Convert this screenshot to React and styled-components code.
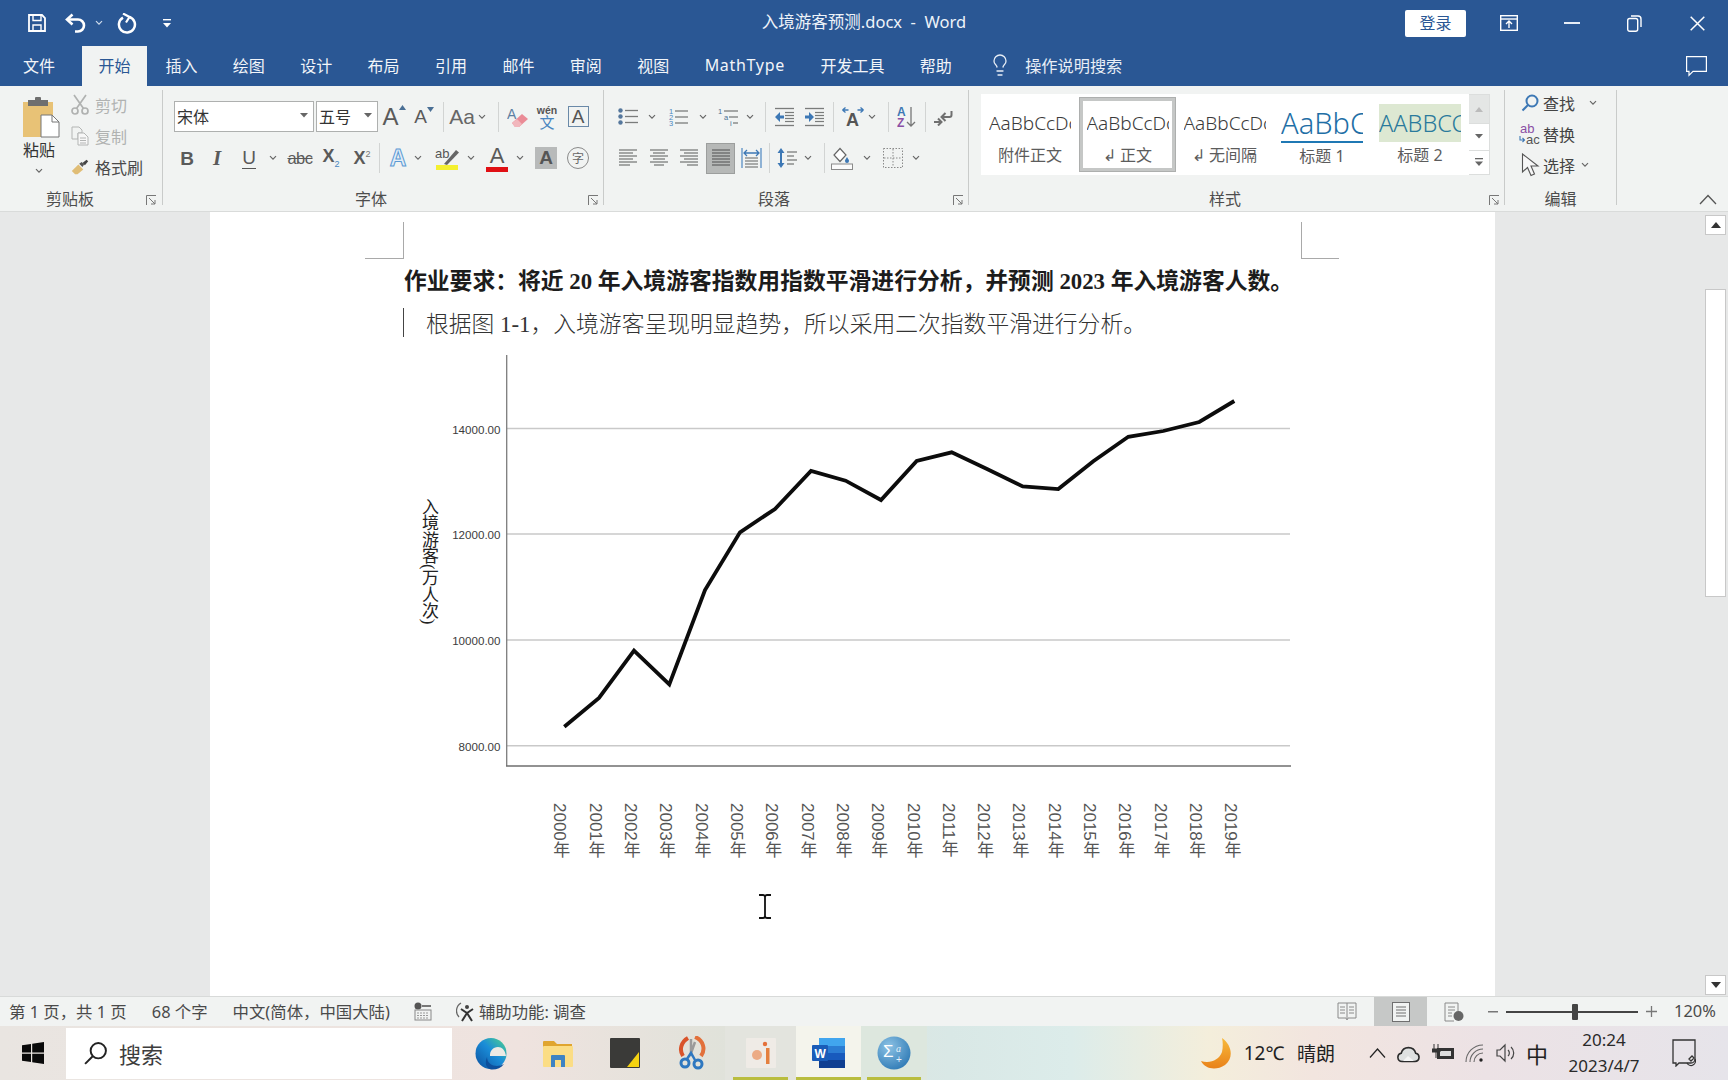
import React from "react";
import styled, { createGlobalStyle } from "styled-components";
import { Lightbulb } from "lucide-react";

const SANS = `"Noto Sans", "Noto Sans CJK SC", sans-serif`;
const SERIF = `"Liberation Serif", "Noto Sans CJK SC", serif`;
const BLUE = "#2a5794";
const RIBBON = "#f1f3f2";
const INK = "#5a5a5a";

const Global = createGlobalStyle`
  html, body { margin: 0; padding: 0; height: 100%; overflow: hidden; }
  body { font-family: ${SANS}; }
  svg { display: block; }
`;

const Shell = styled.div`
  width: 1728px; height: 1080px; display: flex; flex-direction: column; background: ${RIBBON}; overflow: hidden;
`;

/* ---------- title + tabs ---------- */
const TitleBar = styled.header`
  flex: none; height: 46px; background: ${BLUE}; color: #fff;
  display: grid; grid-template-columns: minmax(0, 1fr) auto minmax(0, 1fr); align-items: center;
`;
const Quick = styled.div`display: flex; align-items: center; height: 44px;`;
const DocTitle = styled.div`font-size: 16.5px; white-space: pre; color: #eef3f9; margin-top: -4px;`;
const WinControls = styled.div`display: flex; align-items: center; height: 44px; justify-content: flex-end; padding-right: 21px;`;
const SignIn = styled.button`
  flex: none; width: 61px; height: 27px; border: 0; border-radius: 2px; background: #fff; color: ${BLUE};
  font: 16px ${SANS}; padding: 0 0 2px;
`;
const TabBar = styled.nav`
  flex: none; height: 40px; background: ${BLUE}; display: flex; align-items: stretch; gap: 1.4px;
`;
const Tab = styled.div`
  flex: none; display: flex; align-items: center; justify-content: center; font-size: 16px; white-space: nowrap; padding-bottom: 3px;
  padding-left: ${(p) => (p.$w ? 0 : 17)}px; padding-right: ${(p) => (p.$w ? 0 : 17)}px;
  width: ${(p) => (p.$w ? `${p.$w}px` : "auto")};
  margin-right: ${(p) => p.$mr || 0}px;
  letter-spacing: ${(p) => p.$ls || 0}px;
  box-sizing: border-box;
  color: ${(p) => (p.$active ? BLUE : "#f2f5f9")};
  background: ${(p) => (p.$active ? RIBBON : "transparent")};
`;
const TellMe = styled.div`
  display: flex; align-items: center; gap: 13px; margin-left: 18px; color: #e8eef6; font-size: 16.2px; padding-bottom: 3px;
`;
const CommentSlot = styled.div`margin-left: auto; margin-right: 21px; display: flex; align-items: center; color: #fff;`;

/* ---------- ribbon ---------- */
const Ribbon = styled.section`
  flex: none; height: 126px; box-sizing: border-box; background: ${RIBBON}; border-bottom: 1px solid #d9dbda;
  display: flex; align-items: flex-start; padding-top: 4px;
`;
const Group = styled.div`
  flex: none; width: ${(p) => p.$w}px; height: 115px; box-sizing: border-box; display: flex; flex-direction: column;
  border-right: ${(p) => (p.$last ? 0 : "1px solid #c9cbca")};
`;
const GroupBody = styled.div`flex: 1; min-height: 0; display: flex; flex-direction: column; padding-top: ${(p) => p.$pt ?? 11}px;`;
const GroupLabel = styled.div`
  flex: none; height: 24px; margin-bottom: -5px; position: relative; display: flex; align-items: center; justify-content: center;
  font-size: 16px; color: #4d4d4d;
  padding-right: ${(p) => p.$pr || 0}px;
`;
const Launcher = styled.span`position: absolute; right: ${(p) => p.$r ?? 4}px; top: 9px;`;
const Row = styled.div`display: flex; align-items: center; flex: none; height: ${(p) => p.$h}px; margin-top: ${(p) => p.$mt || 0}px;`;
const Slot = styled.div`
  flex: none; width: ${(p) => p.$w}px; margin-left: ${(p) => p.$ml}px; display: flex; align-items: center; justify-content: center; height: 100%;
`;
function Track({ from, h = 31, mt, items }) {
  let x = from;
  return (
    <Row $h={h} $mt={mt}>
      {items.map(([c, w, n], i) => {
        const ml = c - w / 2 - x;
        x = c + w / 2;
        return <Slot key={i} $w={w} $ml={ml}>{n}</Slot>;
      })}
    </Row>
  );
}
const VSep = styled.span`display: block; width: 1px; height: ${(p) => p.$h || 30}px; background: #d2d4d3;`;

const ClipRow = styled.div`display: flex; flex: 1; min-height: 0;`;
const PasteCol = styled.div`flex: none; width: 71px; box-sizing: border-box; padding: 7px 0 0 23px; display: flex; flex-direction: column; font-size: 16px; color: #333;`;
const PasteLabel = styled.div`line-height: 20px; margin-top: 2px;`;
const PasteChevron = styled.div`margin: 8px 0 0 12px;`;
const ClipList = styled.div`display: flex; flex-direction: column; margin-top: -1px;`;
const ClipItem = styled.div`
  height: 31px; display: flex; align-items: center; gap: 6px; font-size: 16px; color: ${(p) => (p.$off ? "#b0b2b1" : "#4a4a4a")};
`;
const IconCell = styled.span`flex: none; width: ${(p) => p.$w || 18}px; display: flex; justify-content: center;`;

const Combo = styled.div`
  width: 100%; height: 31px; box-sizing: border-box; border: 1px solid #aeb0af; background: #fff; display: flex; align-items: center; justify-content: space-between;
  padding: 0 5px 2px 2px; font-size: 16px; color: #333;
`;
const Letter = styled.span`
  font-family: "Liberation Sans", sans-serif; font-size: ${(p) => p.$s || 20}px; color: ${(p) => p.$c || INK}; font-weight: ${(p) => p.$wt || 400};
  font-style: ${(p) => (p.$it ? "italic" : "normal")}; line-height: 1; white-space: nowrap;
`;
const SerifI = styled(Letter)`font-family: "Liberation Serif", serif; font-weight: 700; font-style: italic;`;
const Underlined = styled(Letter)`border-bottom: 1.5px solid #555; padding-bottom: 1px;`;
const Strike = styled(Letter)`text-decoration: line-through; letter-spacing: -0.5px;`;
const Script = styled.span`font-size: 9px; color: ${(p) => p.$c || "#5b8fc0"}; font-weight: 400; vertical-align: ${(p) => (p.$up ? "super" : "sub")}; font-family: "Liberation Sans", sans-serif;`;
const LetterTri = styled.span`display: inline-flex; align-items: flex-start; gap: 0;`;
const BoxedA = styled.span`
  width: 21px; height: 21px; box-sizing: border-box; border: 1px solid #6a89a8; display: flex; align-items: center; justify-content: center;
  font: 19px "Liberation Sans", sans-serif; color: #555;
`;
const ShadedA = styled(BoxedA)`background: #b8baba; border: 0; font-weight: 700; width: 22px; height: 22px;`;
const CircleChar = styled.span`
  width: 22px; height: 22px; box-sizing: border-box; border: 1.5px solid #8a8a8a; border-radius: 50%; display: flex; align-items: center; justify-content: center;
  font-size: 12px; color: #666;
`;
const Outlined = styled.span`
  font: 700 23px "Liberation Sans", sans-serif; color: #e4eef8; -webkit-text-stroke: 1px #5c9ad4; line-height: 1;
`;
const Stack = styled.span`display: flex; flex-direction: column; align-items: center; line-height: 1;`;
const Wen = styled.span`font: 700 10.5px "Liberation Sans", sans-serif; color: #555;`;
const Wenzi = styled.span`font-size: 15px; color: #4a86c0; margin-top: -1px;`;
const BarWrap = styled.span`display: flex; flex-direction: column; align-items: center; line-height: 1;`;
const ColorBar = styled.span`display: block; width: ${(p) => p.$w || 22}px; height: 5px; background: ${(p) => p.$c}; margin-top: 0;`;
const ActiveBox = styled.div`
  width: 29px; height: 31px; box-sizing: border-box; background: #b6b8b7; border: 1px solid #9c9e9d; display: flex; align-items: center; justify-content: center;
`;

/* styles gallery */
const GalleryRow = styled.div`display: flex; margin-left: 12px; flex: none; height: 81px;`;
const Gallery = styled.div`display: flex; background: #fff; width: 488px; height: 81px; flex: none;`;
const StyleCard = styled.div`
  flex: none; width: ${(p) => p.$w}px; height: ${(p) => (p.$sel ? 75 : 81)}px; box-sizing: border-box; overflow: hidden; display: flex; flex-direction: column; align-items: center;
  margin-top: ${(p) => (p.$sel ? 3 : 0)}px;
  border: ${(p) => (p.$sel ? "4px solid #c5c7c6" : "0")};
  outline: ${(p) => (p.$sel ? "1px solid #adafae" : "0")};
  outline-offset: -1px;
  padding-top: ${(p) => (p.$sel ? 3 : 10)}px;
  color: #333;
`;
const Sample = styled.div`
  height: 38px; width: 82px; flex: none; overflow: hidden; white-space: nowrap; font-family: "Noto Sans", sans-serif; font-size: 19px; line-height: 38px;
  color: #3a3a3a; text-align: left; font-weight: 300;
`;
const Heading1 = styled(Sample)`font-size: 29px; color: #1f6fa6; border-bottom: 2px solid #1f78b4; height: 37px;`;
const Heading2 = styled(Sample)`font-size: 23.5px; color: #2a7a9c; background: #dde8d2;`;
const StyleName = styled.div`font-size: 16px; line-height: 22px; color: #5c5c5c; margin-top: 2px; display: flex; align-items: center; gap: 4px;`;
const GalScroll = styled.div`flex: none; width: 21px; height: 81px; display: flex; flex-direction: column; background: #fff; box-sizing: border-box; border: 1px solid #dcdedd; border-left: 0;`;
const GalBtn = styled.div`
  display: flex; align-items: center; justify-content: center; height: ${(p) => p.$h}px; background: ${(p) => (p.$dim ? "#e4e6e5" : "#fff")}; border-bottom: ${(p) => (p.$last ? 0 : "1px solid #dcdedd")};
`;
const EditList = styled.div`display: flex; flex-direction: column; flex: 1; margin-top: -1px;`;
const EditItem = styled.div`
  height: 31px; display: flex; align-items: center; padding-left: 12px; font-size: 16px; color: #444; padding-bottom: 3px; box-sizing: border-box;
`;
const EditIcon = styled.span`flex: none; width: 26px; display: flex; justify-content: center;`;
const EditChev = styled.span`margin-left: ${(p) => p.$ml}px;`;
const Collapse = styled.div`margin-left: auto; margin-right: 11px; margin-top: 104px; color: #555; flex: none;`;

/* ---------- document ---------- */
const Main = styled.main`flex: 1; min-height: 0; display: flex; background: #e7e8e8; position: relative;`;
const PageColumn = styled.div`flex: none; width: 1285px; margin-left: 210px; background: #fff; position: relative; box-sizing: border-box; padding: 48px 0 0 194px; overflow: hidden;`;
const CropH = styled.i`position: absolute; top: 46px; width: 38px; height: 1px; background: #a9a9a9; left: ${(p) => p.$l}px;`;
const CropV = styled.i`position: absolute; top: 10px; width: 1px; height: 37px; background: #a9a9a9; left: ${(p) => p.$l}px;`;
const Para = styled.p`
  margin: 0; height: 43px; line-height: 43px; font-family: ${SERIF}; font-size: 22.8px; color: ${(p) => (p.$bold ? "#1c1c1c" : "#333")}; white-space: pre; position: relative;
  font-weight: ${(p) => (p.$bold ? 700 : 300)};
  padding-left: ${(p) => p.$indent || 0}px;
  ${(p) => p.$change && `&::before { content: ""; position: absolute; left: -1px; top: 5px; height: 29px; width: 1px; background: #444; }`}
`;
const Chart = styled.svg`margin: 4px 0 0 -4px;`;
const IBeam = styled.svg`position: absolute; left: 548px; top: 682px;`;
const VScroll = styled.div`
  flex: none; width: 21px; margin-left: 210px; display: flex; flex-direction: column; align-items: stretch; padding-top: 3px; box-sizing: border-box; height: 785px; padding-bottom: 2px;
`;
const ScrollBtn = styled.div`height: 20px; background: #fff; border: 1px solid #c8c8c8; box-sizing: border-box; display: flex; align-items: center; justify-content: center;`;
const ThumbTrack = styled.div`flex: 1; padding-top: 54px;`;
const Thumb = styled.div`height: 308px; background: #fff; border: 1px solid #c8c8c8; box-sizing: border-box;`;

/* ---------- status bar ---------- */
const StatusBar = styled.footer`
  flex: none; height: 30px; box-sizing: border-box; background: ${RIBBON}; border-top: 1px solid #d8dad9;
  display: flex; align-items: center; font-size: 16.4px; color: #4a4a4a; position: relative;
`;
const StatusText = styled.span`flex: none; margin-left: ${(p) => p.$ml}px; white-space: pre; padding-bottom: 2px;`;
const StatusIcon = styled.span`flex: none; margin-left: ${(p) => p.$ml}px; display: flex;`;
const ViewBtn = styled.span`
  flex: none; height: 29px; width: ${(p) => p.$w}px; margin-left: ${(p) => p.$ml}px; background: ${(p) => (p.$on ? "#c6c8c7" : "transparent")};
  display: flex; align-items: center; justify-content: center;
`;
const Zoomer = styled.span`flex: none; width: 132px; height: 2px; background: #444; margin-left: 8px; position: relative; `;
const ZoomThumb = styled.i`position: absolute; left: 66px; top: -7px; width: 6px; height: 16px; background: #444; border-radius: 1px;`;
const RightCluster = styled.div`margin-left: auto; display: flex; align-items: center; height: 100%; width: ${(p) => p.$w}px;`;

/* ---------- taskbar ---------- */
const Taskbar = styled.div`
  flex: none; height: 54px; display: flex; align-items: center; position: relative;
  background: linear-gradient(90deg, #e9e5e1 0%, #efe3df 30%, #e0e2da 42%, #d9e8e6 55%, #dcecea 62%, #f4eedb 70%, #f2e5df 76%, #ece2e5 86%, #e6e4ea 100%);
`;
const StartBtn = styled.div`flex: none; width: 66px; display: flex; justify-content: center;`;
const SearchBox = styled.div`
  flex: none; width: 386px; height: 51px; background: #fff; display: flex; align-items: center; padding-left: 17px; gap: 11px; box-sizing: border-box; font-size: 22px; color: #3d3d3d; margin-right: 6px;
`;
const AppSlot = styled.div`
  flex: none; width: ${(p) => p.$w}px; height: 54px; display: flex; align-items: center; justify-content: center; position: relative;
  background: ${(p) => p.$bg || "transparent"};
  ${(p) => p.$run && `&::after { content: ""; position: absolute; bottom: 0; left: ${p.$inset}px; right: ${p.$inset}px; height: 3px; background: #b9bd3f; }`}
`;
const Tray = styled.div`flex: 1; height: 54px; color: #222;`;
const Clock = styled.div`display: flex; flex-direction: column; align-items: center; font-size: 17px; line-height: 26px; color: #2a2a2a; font-family: "Noto Sans", sans-serif;`;
const TrayLabel = styled.span`white-space: nowrap; font-size: ${(p) => p.$s || 19}px;`;

/* ---------- icons ---------- */
const C = "#7a7c7b";
const Chev = ({ c = "#666" }) => (
  <svg width="8" height="6" viewBox="0 0 8 6" fill="none"><path d="M1 1.2 4 4.2 7 1.2" stroke={c} strokeWidth="1.2" /></svg>
);
const Caret = () => (
  <svg width="8" height="5" viewBox="0 0 8 5"><path d="M0 0h8L4 4.5z" fill="#666" /></svg>
);
const LauncherIcon = () => (
  <svg width="11" height="11" viewBox="0 0 11 11" fill="none" stroke="#777"><path d="M.5 10V.5H10" /><path d="M3 3 9 9M9 5v4H5" /></svg>
);
const Lines = ({ w, h, ys, x1, x2, c = C, sw = 1.3 }) => (
  <svg width={w} height={h} viewBox={`0 0 ${w} ${h}`}>
    {ys.map((y, i) => (
      <line key={i} x1={Array.isArray(x1) ? x1[i % x1.length] : x1} x2={Array.isArray(x2) ? x2[i % x2.length] : x2} y1={y} y2={y} stroke={c} strokeWidth={sw} />
    ))}
  </svg>
);
const aligned = [2, 5, 8, 11, 14, 17];
const AlignLeft = () => <Lines w={20} h={20} ys={aligned} x1={1} x2={[19, 15, 19, 15, 19, 12]} />;
const AlignCenter = () => <Lines w={20} h={20} ys={aligned} x1={[1, 4, 1, 4, 1, 5]} x2={[19, 16, 19, 16, 19, 15]} />;
const AlignRight = () => <Lines w={20} h={20} ys={aligned} x1={[1, 5, 1, 5, 1, 8]} x2={19} />;
const Justify = () => <Lines w={20} h={20} ys={aligned} x1={1} x2={19} c="#666" />;
const Bullets = () => (
  <svg width="21" height="17" viewBox="0 0 21 17">
    {[2.5, 8.5, 14.5].map((y) => (
      <g key={y}><circle cx="2.5" cy={y} r="2.2" fill="#55779c" /><line x1="7" x2="20" y1={y} y2={y} stroke={C} strokeWidth="1.3" /></g>
    ))}
  </svg>
);
const Numbers = () => (
  <svg width="21" height="18" viewBox="0 0 21 18" fontFamily="Liberation Sans" fontSize="7.5" fill="#4a86c0">
    <text x="1" y="6">1</text><text x="1" y="12">2</text><text x="1" y="18">3</text>
    {[3, 9, 15].map((y) => <line key={y} x1="7" x2="20" y1={y} y2={y} stroke={C} strokeWidth="1.3" />)}
  </svg>
);
const Multi = () => (
  <svg width="21" height="18" viewBox="0 0 21 18" fontFamily="Liberation Sans" fontSize="7.5" fill="#4a6f95">
    <text x="0" y="6">1</text><text x="6" y="12">a</text><text x="12" y="18">i</text>
    <line x1="6" x2="20" y1="3" y2="3" stroke={C} strokeWidth="1.3" />
    <line x1="11" x2="20" y1="9" y2="9" stroke={C} strokeWidth="1.3" />
    <line x1="15" x2="20" y1="15" y2="15" stroke={C} strokeWidth="1.3" />
  </svg>
);
const Indent = ({ inc }) => (
  <svg width="21" height="20" viewBox="0 0 21 20">
    <line x1="1" x2="20" y1="1.5" y2="1.5" stroke={C} strokeWidth="1.3" />
    <line x1="1" x2="20" y1="18.5" y2="18.5" stroke={C} strokeWidth="1.3" />
    {[5.5, 8.5, 11.5, 14.5].map((y) => <line key={y} x1="11" x2="20" y1={y} y2={y} stroke={C} strokeWidth="1.2" />)}
    {inc ? <path d="M1 8.5h4V5l5 5-5 5v-3.500H1z" fill="#3d78b5" /> : <path d="M10 8.5H6V5l-5 5 5 5v-3.500h4z" fill="#3d78b5" />}
  </svg>
);
const TextDir = () => (
  <svg width="22" height="21" viewBox="0 0 22 21" fill="none">
    <path d="M0.500 4h6M0.500 4l3-2.500M0.500 4l3 2.500" stroke="#3d78b5" strokeWidth="1.3" />
    <path d="M21.500 4h-6M21.500 4l-3-2.500M21.500 4l-3 2.500" stroke="#3d78b5" strokeWidth="1.3" />
    <text x="4" y="20" fontFamily="Liberation Sans" fontWeight="700" fontSize="18" fill="#555">A</text>
  </svg>
);
const Sort = () => (
  <svg width="20" height="22" viewBox="0 0 20 22" fill="none" fontFamily="Liberation Sans" fontWeight="700" fontSize="12">
    <text x="0" y="10" fill="#3d78b5">A</text>
    <text x="0" y="21" fill="#8a4fa5">Z</text>
    <path d="M14 1v19M10 16l4 4 4-4" stroke="#777" strokeWidth="1.3" />
  </svg>
);
const Marks = () => (
  <svg width="20" height="18" viewBox="0 0 20 18" fill="none" strokeWidth="2">
    <path d="M1 14h7M5 10.500 8.500 14 5 17.500" stroke="#707070" />
    <path d="M18.500 3v4a2 2 0 0 1-2 2H9M12.500 5 8.500 9l4 4" stroke="#707070" />
  </svg>
);
const Distribute = () => (
  <svg width="21" height="22" viewBox="0 0 21 22" fill="none">
    <line x1="1" x2="1" y1="1" y2="21" stroke="#5a8fc4" strokeWidth="1.3" />
    <line x1="20" x2="20" y1="1" y2="21" stroke="#5a8fc4" strokeWidth="1.3" />
    <path d="M3 6h15M6 3 3 6l3 3M15 3l3 3-3 3" stroke="#3d78b5" strokeWidth="1.300" />
    {[11, 14, 17, 20].map((y) => <line key={y} x1="4" x2="17" y1={y} y2={y} stroke={C} strokeWidth="1.2" />)}
  </svg>
);
const LineSpacing = () => (
  <svg width="21" height="22" viewBox="0 0 21 22" fill="none">
    <path d="M4 1 0.500 6h7zM4 21l-3.500-5h7z" fill="#3d78b5" />
    <line x1="4" x2="4" y1="5" y2="17" stroke="#3d78b5" strokeWidth="2" />
    {[5, 9, 13, 17].map((y, i) => <line key={y} x1="10" x2={i % 2 ? 17 : 20} y1={y} y2={y} stroke={C} strokeWidth="1.3" />)}
  </svg>
);
const Shading = () => (
  <svg width="22" height="23" viewBox="0 0 22 23" fill="none">
    <path d="M9 1.500 3 8l6 6.500L15 8z" stroke="#666" strokeWidth="1.2" fill="#fff" />
    <path d="M16 10c1 1.600 2 2.800 2 4a2 2 0 0 1-4 0c0-1.200 1-2.400 2-4z" fill="#3d78b5" />
    <rect x=".5" y="17" width="21" height="5.500" stroke="#8a8a8a" fill="#fbfbfb" />
  </svg>
);
const Borders = () => (
  <svg width="20" height="20" viewBox="0 0 20 20" fill="none" stroke="#8a8a8a" strokeWidth="1" strokeDasharray="1.500 1.500">
    <rect x=".5" y=".5" width="19" height="19" />
    <path d="M10 1v18M1 10h18" />
  </svg>
);
const PasteIcon = () => (
  <svg width="37" height="41" viewBox="0 0 37 41">
    <rect x="0" y="5" width="30" height="35" fill="#e8c276" />
    <rect x="5" y="3" width="20" height="6" fill="#6f6f6f" />
    <rect x="12" y="0" width="6" height="5" rx="1" fill="#6f6f6f" />
    <path d="M18 18h11l7 7v15H18z" fill="#fff" stroke="#777" />
    <path d="M29 18v7h7" fill="none" stroke="#777" />
  </svg>
);
const CutIcon = () => (
  <svg width="18" height="21" viewBox="0 0 18 21" fill="none" stroke="#b0b2b1" strokeWidth="1.700">
    <circle cx="4" cy="17" r="3" /><circle cx="14" cy="17" r="3" />
    <path d="M5.500 14.500 15 1M12.500 14.500 3 1" />
  </svg>
);
const CopyIcon = () => (
  <svg width="18" height="20" viewBox="0 0 18 20" fill="none" stroke="#b3b5b4">
    <path d="M1 1h7l3 3v3H7v6H1z" /><path d="M7 7h6l4 4v8H7z" fill="#f7f7f7" /><path d="M9 12h6M9 14.500h6M9 17h6" />
  </svg>
);
const BrushIcon = () => (
  <svg width="22" height="20" viewBox="0 0 22 20">
    <path d="M1 15 9 7l6 6-7 6H5z" fill="#e0bd76" />
    <path d="M10 6l3-2 3 3-2 3z" fill="#555" />
    <path d="M14 5l5-4 2 2-4 5z" fill="#444" />
  </svg>
);
const EraserIcon = () => (
  <svg width="22" height="22" viewBox="0 0 22 22">
    <text x="0" y="13" fontFamily="Liberation Sans" fontSize="14" fill="#5d7fa2">A</text>
    <path d="M5 17 15 8l6 5-9 8H8z" fill="#ea8b96" />
    <path d="M5 17l3 4h4l3-3-5-5z" fill="#f1b6bc" />
  </svg>
);
const Highlighter = () => (
  <svg width="24" height="18" viewBox="0 0 24 18">
    <text x="0" y="11" fontFamily="Liberation Sans" fontSize="13" fill="#555">ab</text>
    <path d="M9 17 21 3l3 2.500L12 18z" fill="#666" />
  </svg>
);
const SearchGlass = ({ c = "#3d78b5", s = 18, w = 2 }) => (
  <svg width={s} height={s} viewBox="0 0 18 18" fill="none" stroke={c} strokeWidth={w}>
    <circle cx="11" cy="7" r="5.500" /><path d="M7 11 1.500 16.500" />
  </svg>
);
const AbAc = () => (
  <svg width="22" height="24" viewBox="0 0 22 24" fontFamily="Liberation Sans" fontSize="13">
    <text x="1" y="11" fill="#8a4fa5">ab</text>
    <text x="7" y="22" fill="#555">ac</text>
    <path d="M1 14v4h4M3.500 16l2 2-2 2" stroke="#3d78b5" fill="none" strokeWidth="1.100" />
  </svg>
);
const ArrowCursor = () => (
  <svg width="19" height="25" viewBox="0 0 19 25" fill="#f7f7f7" stroke="#555" strokeWidth="1.100">
    <path d="M1.500 1v18l5-4.500 3.500 8 3.500-1.500-3.500-8h7z" />
  </svg>
);
const WinLogo = () => (
  <svg width="22" height="22" viewBox="0 0 22 22" fill="#0a0a0a">
    <path d="M0 3.200 9 2v8.500H0zM10.200 1.800 22 0v10.500H10.200zM0 11.700h9V20L0 18.800zM10.200 11.700H22V22l-11.800-1.800z" />
  </svg>
);
const Edge = () => (
  <svg width="32" height="33" viewBox="0 0 32 33">
    <defs>
      <linearGradient id="eg" x1="0" y1="1" x2="1" y2="0"><stop offset="0" stopColor="#0c4f9e" /><stop offset=".55" stopColor="#1a8dd8" /><stop offset="1" stopColor="#4fd48a" /></linearGradient>
    </defs>
    <circle cx="16" cy="16.500" r="15.500" fill="url(#eg)" />
    <path d="M31 19H15c-.500-5 3-9 8-9 4 0 7 3 8 9z" fill="#eceae4" />
    <path d="M12 20c0 6 5 9 10 9 2 0 5-1 7-2-3 4-8 6-13 5.500C10 31 10 25 12 20z" fill="#0d4f9c" />
  </svg>
);
const Folder = () => (
  <svg width="30" height="27" viewBox="0 0 30 27">
    <path d="M0 2a1 1 0 0 1 1-1h10l3 3h15v6H0z" fill="#e0a52f" />
    <rect x="0" y="6" width="30" height="21" rx="1" fill="#fbdd85" />
    <path d="M8 27V16a1 1 0 0 1 1-1h12a1 1 0 0 1 1 1v11h-4v-7h-6v7z" fill="#3e83c3" />
  </svg>
);
const Sticky = () => (
  <svg width="30" height="30" viewBox="0 0 30 30">
    <rect width="30" height="30" rx="1" fill="#3a3a38" />
    <path d="M29 14v15H17z" fill="#f5d312" />
  </svg>
);
const SnipIcon = () => (
  <svg width="28" height="34" viewBox="0 0 28 34" fill="none">
    <path d="M10 2C3 6 1 14 5 20" stroke="#d9542b" strokeWidth="4" />
    <path d="M17 1c8 3 11 12 6 19" stroke="#e2703b" strokeWidth="4" />
    <path d="M13 3v14M17 6l-5 14" stroke="#9a9a9a" strokeWidth="2.500" />
    <circle cx="7" cy="27" r="4" stroke="#2f78c0" strokeWidth="3" />
    <circle cx="20" cy="28" r="4" stroke="#2f78c0" strokeWidth="3" />
    <path d="M9 23l4-6 4 7" stroke="#2f78c0" strokeWidth="2.500" />
  </svg>
);
const Tile = () => (
  <svg width="30" height="30" viewBox="0 0 30 30">
    <rect width="30" height="30" rx="1" fill="#efebe6" />
    <circle cx="11" cy="17" r="5" fill="#ecab85" />
    <circle cx="19" cy="6" r="2.200" fill="#e4703a" />
    <rect x="20" y="10" width="3.500" height="16" fill="#e4803f" />
  </svg>
);
const WordIcon = () => (
  <svg width="33" height="30" viewBox="0 0 33 30">
    <rect x="7" y="0" width="26" height="8" fill="#41a5ee" />
    <rect x="7" y="8" width="26" height="7" fill="#2b7cd3" />
    <rect x="7" y="15" width="26" height="7" fill="#185abd" />
    <rect x="7" y="22" width="26" height="8" fill="#103f91" />
    <rect x="0" y="7" width="16" height="16" rx="1" fill="#1a5cb8" />
    <text x="2.500" y="19.500" fontFamily="Liberation Sans" fontWeight="700" fontSize="12" fill="#fff">W</text>
  </svg>
);
const SigmaIcon = () => (
  <svg width="34" height="34" viewBox="0 0 34 34">
    <defs><radialGradient id="sg" cx=".35" cy=".3" r=".8"><stop offset="0" stopColor="#8cc2e4" /><stop offset="1" stopColor="#2c78b4" /></radialGradient></defs>
    <circle cx="17" cy="17" r="16.500" fill="url(#sg)" />
    <text x="6" y="21" fontFamily="Liberation Sans" fontSize="17" fill="#fff">Σ</text>
    <text x="19" y="16" fontFamily="Liberation Serif" fontStyle="italic" fontSize="10" fill="#eaf4fb">a</text>
    <text x="19" y="27" fontFamily="Liberation Sans" fontSize="10" fill="#eaf4fb">+</text>
  </svg>
);
const Moon = () => (
  <svg width="32" height="31" viewBox="0 0 32 31">
    <defs><linearGradient id="mg" x1="0" y1="0" x2="0" y2="1"><stop offset="0" stopColor="#f7b93a" /><stop offset="1" stopColor="#e9821a" /></linearGradient></defs>
    <path d="M21 0C31 7 33 20 24 27 15 33 4 31 0 23 9 26 18 22 21 14 22 9 22 4 21 0z" fill="url(#mg)" />
  </svg>
);
const CloudTray = () => (
  <svg width="23" height="19" viewBox="0 0 23 19" fill="#dfe1e1" stroke="#2c2c2c" strokeWidth="1.600">
    <path d="M5 17.500a4.200 4.200 0 0 1-.8-8.300 7.500 7.500 0 0 1 14.500 0 4.200 4.200 0 0 1-.7 8.300z" />
    <path d="M6 17l5-5 6 5" fill="#f5f5f5" stroke="none" />
  </svg>
);

const yrs = Array.from({ length: 20 }, (_, i) => 2000 + i);
const pts = [[564.3,726.7],[599,698],[634,650.7],[669.3,684.3],[705,590],[740,532.3],[775,509],[811,471],[845.6,480.7],[881,500],[916.7,460.9],[951.7,452.3],[987,469],[1022.7,486.4],[1058.3,489.1],[1093.3,461.2],[1128.3,436.8],[1163.3,431],[1199.3,422],[1234.3,401]];
const grid = [[428.5,"14000.00"],[534,"12000.00"],[640,"10000.00"],[745.7,"8000.00"]];

const ChartFig = () => (
  <Chart width="920" height="520" viewBox="400 350 920 520">
    {grid.map(([y, t]) => (
      <g key={t}>
        <line x1="507" x2="1290" y1={y} y2={y} stroke="#c9c9c9" strokeWidth="1.5" />
        <text x="500.500" y={y + 5} textAnchor="end" fontFamily="Liberation Sans" fontSize="11.600" fill="#3c3c3c">{t}</text>
      </g>
    ))}
    <line x1="506.700" x2="506.700" y1="355" y2="766" stroke="#7c7c7c" strokeWidth="1.300" />
    <line x1="506" x2="1291" y1="766" y2="766" stroke="#6e6e6e" strokeWidth="1.500" />
    <polyline points={pts.map((p) => p.join(",")).join(" ")} fill="none" stroke="#0c0c0c" strokeWidth="3.800" strokeLinejoin="miter" />
    <text x="428.500" y="498" style={{ writingMode: "vertical-rl" }} fontFamily={SERIF} fontSize="17" fill="#222" letterSpacing="-0.5">入境游客(万人次)</text>
    {yrs.map((y, i) => (
      <text key={y} x={559.7 + i * 35.33} y="803" style={{ writingMode: "vertical-rl" }} fontFamily={`"Liberation Sans","Noto Sans CJK SC",sans-serif`} fontSize="17" fill="#555">{y}年</text>
    ))}
  </Chart>
);

export default function App() {
  return (
    <Shell>
      <Global />
      <TitleBar>
        <Quick>
          <Track from={0} h={44} items={[
            [37, 24, <svg width="18" height="18" viewBox="0 0 18 18" fill="none" stroke="#fff" strokeWidth="1.800"><path d="M1 1h13l3 3v13H1z" /><path d="M5 1.500v5h8v-5M5 17v-6h8v6" strokeWidth="1.400" /></svg>],
            [76, 24, <svg width="22" height="20" viewBox="0 0 22 20" fill="none" stroke="#fff" strokeWidth="2.600"><path d="M7.500 1.500 2 6.500l5.500 5" /><path d="M2.500 6.500H13a6 6 0 0 1 0 12h-3" /></svg>],
            [99, 10, <Chev c="#cfdcec" />],
            [127, 24, <svg width="20" height="21" viewBox="0 0 20 21" fill="none" stroke="#fff" strokeWidth="2.500"><path d="M12.500 4A8 8 0 1 1 6 4.600" /><path d="M6 .5 12.500 4 9 9.500" strokeWidth="2.200" /></svg>],
            [167, 12, <svg width="8" height="9" viewBox="0 0 8 9" fill="#fff"><rect width="8" height="1.400" /><path d="M0 4h8L4 8.500z" /></svg>],
          ]} />
        </Quick>
        <DocTitle>{"入境游客预测.docx  -  Word"}</DocTitle>
        <WinControls>
          <SignIn>登录</SignIn>
          <Track from={1466} h={44} items={[
            [1509, 24, <svg width="18" height="16" viewBox="0 0 18 16" fill="none" stroke="#fff" strokeWidth="1.400"><rect x=".7" y=".7" width="16.600" height="14.600" /><path d="M1 4h16" /><path d="M9 13V6.500M6 9l3-3 3 3" /></svg>],
            [1572, 20, <svg width="16" height="2"><rect width="16" height="2" fill="#e6edf6" /></svg>],
            [1634, 20, <svg width="15" height="17" viewBox="0 0 15 17" fill="none" stroke="#fff" strokeWidth="1.400"><rect x=".7" y="3.500" width="10" height="12.800" rx="2" /><path d="M4 1h7a3 3 0 0 1 3 3v8" /></svg>],
            [1697, 20, <svg width="15" height="15" viewBox="0 0 15 15" stroke="#fff" strokeWidth="1.500"><path d="M.7.700l13.600 13.600M14.300.700.700 14.300" /></svg>],
          ]} />
        </WinControls>
      </TitleBar>

      <TabBar>
        <Tab $w={78} $mr={2.6}>文件</Tab>
        <Tab $active $w={65}>开始</Tab>
        {["插入", "绘图", "设计", "布局", "引用", "邮件", "审阅", "视图"].map((t) => <Tab key={t}>{t}</Tab>)}
        <Tab $ls={0.7}>MathType</Tab>
        <Tab>开发工具</Tab>
        <Tab>帮助</Tab>
        <TellMe>
          <Lightbulb size={24} strokeWidth={1.300} />
          <span>操作说明搜索</span>
        </TellMe>
        <CommentSlot>
          <svg width="21" height="21" viewBox="0 0 21 21" fill="none" stroke="#fff" strokeWidth="1.200"><path d="M.6.600h19.800v14.800H7l-4 4v-4H.6z" /></svg>
        </CommentSlot>
      </TabBar>

      <Ribbon>
        <Group $w={163}>
          <ClipRow>
            <PasteCol>
              <PasteIcon />
              <PasteLabel>粘贴</PasteLabel>
              <PasteChevron><Chev /></PasteChevron>
            </PasteCol>
            <ClipList>
              <ClipItem $off><IconCell><CutIcon /></IconCell>剪切</ClipItem>
              <ClipItem $off><IconCell><CopyIcon /></IconCell>复制</ClipItem>
              <ClipItem><IconCell><BrushIcon /></IconCell>格式刷</ClipItem>
            </ClipList>
          </ClipRow>
          <GroupLabel $pr={22}>剪贴板<Launcher $r={5}><LauncherIcon /></Launcher></GroupLabel>
        </Group>

        <Group $w={441}>
          <GroupBody>
            <Track from={163} items={[
              [244, 140, <Combo>宋体<Caret /></Combo>],
              [347, 62, <Combo>五号<Caret /></Combo>],
              [394, 28, <LetterTri><Letter $s={24}>A</Letter><svg width="7" height="5" viewBox="0 0 7 5"><path d="M3.500 0 7 5H0z" fill="#4a6f95" /></svg></LetterTri>],
              [424, 26, <LetterTri><Letter $s={19}>A</Letter><svg width="7" height="5" viewBox="0 0 7 5"><path d="M3.500 5 7 0H0z" fill="#4a6f95" /></svg></LetterTri>],
              [443, 2, <VSep />],
              [462, 26, <Letter $s={21} $c="#666">Aa</Letter>],
              [482, 10, <Chev />],
              [498, 2, <VSep />],
              [518, 24, <EraserIcon />],
              [547, 24, <Stack><Wen>wén</Wen><Wenzi>文</Wenzi></Stack>],
              [578, 24, <BoxedA>A</BoxedA>],
            ]} />
            <Track from={163} h={34} mt={9} items={[
              [187, 20, <Letter $s={19} $wt={700}>B</Letter>],
              [217, 18, <SerifI $s={21}>I</SerifI>],
              [249, 20, <Underlined $s={19}>U</Underlined>],
              [273, 10, <Chev />],
              [300, 28, <Strike $s={16.500}>abc</Strike>],
              [331, 26, <Letter $s={18} $wt={700}>X<Script $c="#4a86c0">2</Script></Letter>],
              [362, 26, <Letter $s={18} $wt={700}>X<Script $up $c="#777">2</Script></Letter>],
              [379, 2, <VSep />],
              [398, 24, <Outlined>A</Outlined>],
              [418, 10, <Chev />],
              [447, 26, <BarWrap><Highlighter /><ColorBar $c="#f4f030" /></BarWrap>],
              [471, 10, <Chev />],
              [497, 26, <BarWrap><Letter $s={22}>A</Letter><ColorBar $c="#e00f14" /></BarWrap>],
              [520, 10, <Chev />],
              [546, 24, <ShadedA>A</ShadedA>],
              [578, 24, <CircleChar>字</CircleChar>],
            ]} />
          </GroupBody>
          <GroupLabel $pr={24}>字体<Launcher><LauncherIcon /></Launcher></GroupLabel>
        </Group>

        <Group $w={365}>
          <GroupBody>
            <Track from={604} items={[
              [628, 22, <Bullets />],
              [652, 10, <Chev />],
              [678, 22, <Numbers />],
              [703, 10, <Chev />],
              [728, 22, <Multi />],
              [750, 10, <Chev />],
              [765, 2, <VSep />],
              [784, 22, <Indent />],
              [814, 22, <Indent inc />],
              [833, 2, <VSep />],
              [853, 24, <TextDir />],
              [872, 10, <Chev />],
              [888, 2, <VSep />],
              [907, 22, <Sort />],
              [925, 2, <VSep />],
              [943, 22, <Marks />],
            ]} />
            <Track from={604} h={34} mt={9} items={[
              [628, 20, <AlignLeft />],
              [659, 20, <AlignCenter />],
              [689, 20, <AlignRight />],
              [720.500, 29, <ActiveBox><Justify /></ActiveBox>],
              [751, 22, <Distribute />],
              [769, 2, <VSep />],
              [787, 22, <LineSpacing />],
              [808, 10, <Chev />],
              [824, 2, <VSep />],
              [842, 24, <Shading />],
              [867, 10, <Chev />],
              [893, 22, <Borders />],
              [916, 10, <Chev />],
            ]} />
          </GroupBody>
          <GroupLabel $pr={24}>段落<Launcher><LauncherIcon /></Launcher></GroupLabel>
        </Group>

        <Group $w={536}>
          <GroupBody $pt={4}>
            <GalleryRow>
              <Gallery>
                <StyleCard $w={98}><Sample>AaBbCcDc</Sample><StyleName>附件正文</StyleName></StyleCard>
                <StyleCard $w={97} $sel><Sample>AaBbCcDc</Sample><StyleName><span>↲</span>正文</StyleName></StyleCard>
                <StyleCard $w={97}><Sample>AaBbCcDc</Sample><StyleName><span>↲</span>无间隔</StyleName></StyleCard>
                <StyleCard $w={98}><Heading1>AaBbC</Heading1><StyleName>标题 1</StyleName></StyleCard>
                <StyleCard $w={98}><Heading2>AABBCC</Heading2><StyleName>标题 2</StyleName></StyleCard>
              </Gallery>
              <GalScroll>
                <GalBtn $h={29} $dim><svg width="8" height="5" viewBox="0 0 8 5"><path d="M0 5h8L4 0z" fill="#bbb" /></svg></GalBtn>
                <GalBtn $h={26}><Caret /></GalBtn>
                <GalBtn $h={24} $last><svg width="8" height="8" viewBox="0 0 8 8" fill="#666"><rect width="8" height="1.300" /><path d="M0 3.500h8L4 8z" /></svg></GalBtn>
              </GalScroll>
            </GalleryRow>
          </GroupBody>
          <GroupLabel $pr={23}>样式<Launcher><LauncherIcon /></Launcher></GroupLabel>
        </Group>

        <Group $w={112}>
          <EditList>
            <EditItem><EditIcon><SearchGlass /></EditIcon>查找<EditChev $ml={14}><Chev /></EditChev></EditItem>
            <EditItem><EditIcon><AbAc /></EditIcon>替换</EditItem>
            <EditItem><EditIcon><ArrowCursor /></EditIcon>选择<EditChev $ml={6}><Chev /></EditChev></EditItem>
          </EditList>
          <GroupLabel>编辑</GroupLabel>
        </Group>

        <Collapse><svg width="18" height="11" viewBox="0 0 18 11" fill="none" stroke="#555" strokeWidth="1.300"><path d="M1 10 9 1.500 17 10" /></svg></Collapse>
      </Ribbon>

      <Main>
        <PageColumn>
          <CropH $l={155} /><CropV $l={193} />
          <CropH $l={1091} /><CropV $l={1091} />
          <Para $bold>{"作业要求：将近 20 年入境游客指数用指数平滑进行分析，并预测 2023 年入境游客人数。"}</Para>
          <Para $indent={22} $change>{"根据图 1-1，入境游客呈现明显趋势，所以采用二次指数平滑进行分析。"}</Para>
          <ChartFig />
          <IBeam width="14" height="25" viewBox="0 0 14 25" fill="none" stroke="#111" strokeWidth="1.800">
            <path d="M1 1h4c1 0 2 .500 2 2v19c0 1.500-1 2-2 2H1M13 1H9C8 1 7 1.500 7 3M13 24H9c-1 0-2-.500-2-2" />
          </IBeam>
        </PageColumn>
        <VScroll>
          <ScrollBtn><svg width="10" height="6" viewBox="0 0 10 6"><path d="M0 6h10L5 0z" fill="#333" /></svg></ScrollBtn>
          <ThumbTrack><Thumb /></ThumbTrack>
          <ScrollBtn><svg width="10" height="6" viewBox="0 0 10 6"><path d="M0 0h10L5 6z" fill="#333" /></svg></ScrollBtn>
        </VScroll>
      </Main>

      <StatusBar>
        <StatusText $ml={9}>第 1 页，共 1 页</StatusText>
        <StatusText $ml={25}>68 个字</StatusText>
        <StatusText $ml={25}>中文(简体，中国大陆)</StatusText>
        <StatusIcon $ml={24}>
          <svg width="18" height="19" viewBox="0 0 18 19" fill="none"><circle cx="4" cy="4" r="3.500" fill="#555" /><rect x="8" y="3" width="9" height="2" fill="#777" /><rect x="1" y="8" width="16" height="10" stroke="#888" /><path d="M3 11h12M3 13.500h12M3 16h12" stroke="#999" strokeDasharray="2 1" /></svg>
        </StatusIcon>
        <StatusIcon $ml={24}>
          <svg width="20" height="20" viewBox="0 0 20 20" fill="none"><path d="M5 1a9 9 0 0 0-2 14" stroke="#666" strokeWidth="1.300" /><circle cx="11" cy="5" r="2" fill="#444" /><path d="M5 7l6 4 6-4M11 11l-5 8M11 11l5 8" stroke="#333" strokeWidth="2" /></svg>
        </StatusIcon>
        <StatusText $ml={3}>辅助功能: 调查</StatusText>
        <RightCluster $w={391}>
          <StatusIcon $ml={0}>
            <svg width="20" height="19" viewBox="0 0 20 19" fill="none" stroke="#8a8a8a"><path d="M1 1h18v15H11l-1 2-1-2H1zM10 1v15" /><path d="M3 5h5M3 8h5M3 11h5M12 5h5M12 8h5M12 11h5" /></svg>
          </StatusIcon>
          <ViewBtn $on $w={53} $ml={17}>
            <svg width="18" height="20" viewBox="0 0 18 20" fill="#f1f3f2" stroke="#6f6f6f"><rect x=".5" y=".5" width="17" height="19" /><path d="M4 5h10M4 8h10M4 11h10M4 14h10" /></svg>
          </ViewBtn>
          <StatusIcon $ml={17}>
            <svg width="20" height="20" viewBox="0 0 20 20" fill="none" stroke="#8a8a8a"><path d="M10 19H1V1h13v8" /><path d="M4 5h7M4 8h7M4 11h4M4 14h4" /><circle cx="14.500" cy="14" r="5" fill="#666" stroke="none" /></svg>
          </StatusIcon>
          <StatusIcon $ml={24}><svg width="10" height="2"><rect width="10" height="1.500" fill="#777" /></svg></StatusIcon>
          <Zoomer><ZoomThumb /></Zoomer>
          <StatusIcon $ml={8}><svg width="11" height="11" viewBox="0 0 11 11"><path d="M0 5.500h11M5.500 0v11" stroke="#777" strokeWidth="1.300" /></svg></StatusIcon>
          <StatusText $ml={17}>120%</StatusText>
        </RightCluster>
      </StatusBar>

      <Taskbar>
        <StartBtn><WinLogo /></StartBtn>
        <SearchBox><SearchGlass c="#222" s={25} w={1.400} /><span>搜索</span></SearchBox>
        <AppSlot $w={66}><Edge /></AppSlot>
        <AppSlot $w={67}><Folder /></AppSlot>
        <AppSlot $w={68}><Sticky /></AppSlot>
        <AppSlot $w={66}><SnipIcon /></AppSlot>
        <AppSlot $w={71} $bg="#e3e4de" $run $inset={8}><Tile /></AppSlot>
        <AppSlot $w={65} $bg="#f4f4ec" $run $inset={0}><WordIcon /></AppSlot>
        <AppSlot $w={66} $bg="#dde7de" $run $inset={6}><SigmaIcon /></AppSlot>
        <Tray>
          <Track from={927} h={54} items={[
            [1217, 34, <Moon />],
            [1264, 46, <TrayLabel>12℃</TrayLabel>],
            [1316, 40, <TrayLabel>晴朗</TrayLabel>],
            [1377, 18, <svg width="17" height="10" viewBox="0 0 17 10" fill="none" stroke="#222" strokeWidth="1.200"><path d="M1 9.500 8.500 1 16 9.500" /></svg>],
            [1408, 23, <CloudTray />],
            [1443, 22, <svg width="22" height="18" viewBox="0 0 22 18"><rect x="5" y="4" width="17" height="11" fill="#333" /><rect x="8" y="7" width="11" height="5" fill="#ddd" /><path d="M2 0v5M6 0v5M0 5h8v3H0zM4 8v6" stroke="#333" fill="#333" /></svg>],
            [1475, 20, <svg width="20" height="19" viewBox="0 0 20 19" fill="none" stroke="#666" strokeWidth="1.100"><path d="M1 18A17 17 0 0 1 18 1M5 18A13 13 0 0 1 18 5M9 18a9 9 0 0 1 9-9" /><circle cx="16" cy="16" r="1.700" fill="#222" stroke="none" /></svg>],
            [1506, 20, <svg width="20" height="20" viewBox="0 0 20 20" fill="none" stroke="#444" strokeWidth="1.200"><path d="M1 7v6h3l5 5V2L4 7zM12 7a4 4 0 0 1 0 6M15 4a8 8 0 0 1 0 12" /></svg>],
            [1537, 26, <TrayLabel $s={22}>中</TrayLabel>],
            [1604, 82, <Clock><span>20:24</span><span>2023/4/7</span></Clock>],
            [1684, 26, <svg width="24" height="28" viewBox="0 0 24 28" fill="none" stroke="#333" strokeWidth="1.300"><path d="M1 1h22v19a4 4 0 0 1-4 4H7l-3 3v-3H1z" /><path d="M15 24a4 4 0 0 0 8-4" /><path d="M17 20l3-3 2 2-3 3z" fill="#eee" /></svg>],
          ]} />
        </Tray>
      </Taskbar>
    </Shell>
  );
}
